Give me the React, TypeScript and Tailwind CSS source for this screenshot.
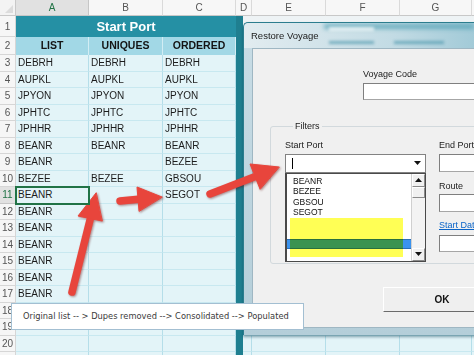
import React from 'react';

type RowData = { n: number; a: string; b: string; c: string };

const DATA: RowData[] = [
  { n: 3, a: 'DEBRH', b: 'DEBRH', c: 'DEBRH' },
  { n: 4, a: 'AUPKL', b: 'AUPKL', c: 'AUPKL' },
  { n: 5, a: 'JPYON', b: 'JPYON', c: 'JPYON' },
  { n: 6, a: 'JPHTC', b: 'JPHTC', c: 'JPHTC' },
  { n: 7, a: 'JPHHR', b: 'JPHHR', c: 'JPHHR' },
  { n: 8, a: 'BEANR', b: 'BEANR', c: 'BEANR' },
  { n: 9, a: 'BEANR', b: '', c: 'BEZEE' },
  { n: 10, a: 'BEZEE', b: 'BEZEE', c: 'GBSOU' },
  { n: 11, a: 'BEANR', b: '', c: 'SEGOT' },
  { n: 12, a: 'BEANR', b: '', c: '' },
  { n: 13, a: 'BEANR', b: '', c: '' },
  { n: 14, a: 'BEANR', b: '', c: '' },
  { n: 15, a: 'BEANR', b: '', c: '' },
  { n: 16, a: 'BEANR', b: '', c: '' },
  { n: 17, a: 'BEANR', b: '', c: '' },
  { n: 18, a: '', b: '', c: '' },
  { n: 19, a: '', b: '', c: '' },
  { n: 20, a: '', b: '', c: '' },
];

const HEADERS = [
  { l: 'A', w: 'w-[73px]' },
  { l: 'B', w: 'w-[74px]' },
  { l: 'C', w: 'w-[73px]' },
  { l: 'D', w: 'w-[16px]' },
  { l: 'E', w: 'w-[74px]' },
  { l: 'F', w: 'w-[74px]' },
  { l: 'G', w: 'w-[72px]' },
  { l: '', w: 'w-[40px]' },
];

const LIST_ITEMS = ['BEANR', 'BEZEE', 'GBSOU', 'SEGOT', '', '', '', ''];

function RowHead({ n }: { n?: number }) {
  const active = n === 11;
  return (
    <div
      className={
        active
          ? 'w-[16px] shrink-0 flex items-center justify-center bg-[#e1e1e1] border-r border-b border-[#c6c6c6] text-[10px] text-[#217346]'
          : 'w-[16px] shrink-0 flex items-center justify-center bg-[#f6f6f6] border-r border-b border-[#d6d6d6] text-[10px] text-[#555]'
      }
    >
      {n}
    </div>
  );
}

function Cell({ w, text, selected }: { w: string; text?: string; selected?: boolean }) {
  return (
    <div
      className={`${w} shrink-0 flex items-center pl-[2px] bg-[#e3f4f8] border-r border-b border-r-[#b5dee9] border-b-[#c8e8f0] text-[10px] text-[#1c1c1c] ${
        selected ? 'relative z-10 outline-2 -outline-offset-1 outline-[#217346]' : ''
      }`}
    >
      {text}
    </div>
  );
}

function DCell() {
  return (
    <div className="w-[16px] shrink-0 flex">
      <div className="w-[7px] bg-[#1f7f90]" />
      <div className="flex-1 bg-[#e3f4f8] border-r border-b border-r-[#b5dee9] border-b-[#c8e8f0]" />
    </div>
  );
}

function DataRow({ r }: { r?: RowData }) {
  return (
    <div className="flex h-[16.5px] shrink-0">
      <RowHead n={r?.n} />
      <Cell w="w-[73px]" text={r?.a} selected={r?.n === 11} />
      <Cell w="w-[74px]" text={r?.b} />
      <Cell w="w-[73px]" text={r?.c} />
      <DCell />
      <Cell w="w-[74px]" />
      <Cell w="w-[74px]" />
      <Cell w="w-[72px]" />
      <Cell w="w-[40px]" />
    </div>
  );
}

function Sheet() {
  return (
    <div className="flex flex-col font-['Liberation_Sans',Arial,sans-serif]">
      {/* column letters */}
      <div className="flex h-[16px] shrink-0">
        <div className="w-[16px] shrink-0 bg-[#f3f3f3] border-r border-b border-[#c8c8c8] flex items-end justify-end p-[2px]">
          <div className="w-0 h-0 border-l-[8px] border-l-transparent border-b-[8px] border-b-[#dcdcdc]" />
        </div>
        {HEADERS.map((h, i) => (
          <div
            key={i}
            className={
              h.l === 'A'
                ? `${h.w} shrink-0 flex items-center justify-center bg-[#e1e1e1] border-r border-b border-[#c6c6c6] text-[10px] text-[#217346]`
                : `${h.w} shrink-0 flex items-center justify-center bg-[#f7f7f7] border-r border-b border-r-[#dadada] border-b-[#c8c8c8] text-[10px] text-[#555]`
            }
          >
            {h.l}
          </div>
        ))}
      </div>

      {/* row 1 */}
      <div className="flex h-[21px] shrink-0">
        <RowHead n={1} />
        <div className="w-[220px] shrink-0 flex items-center justify-center bg-[#2590a4] text-white font-bold text-[13px]">
          Start Port
        </div>
        <div className="w-[16px] shrink-0 flex">
          <div className="w-[7px] bg-[#1f7f90]" />
          <div className="flex-1 bg-[#eef3f5]" />
        </div>
        <div className="flex-1 bg-[#eef3f5]" />
      </div>

      {/* row 2 */}
      <div className="flex h-[18px] shrink-0">
        <RowHead n={2} />
        {['LIST', 'UNIQUES', 'ORDERED'].map((t, i) => (
          <div
            key={t}
            className={`${i === 1 ? 'w-[74px]' : 'w-[73px]'} shrink-0 flex items-center justify-center bg-[#a2d8e6] border-r border-[#d2edf4] font-bold text-[10.5px] text-[#141414]`}
          >
            {t}
          </div>
        ))}
        <DCell />
        <div className="flex-1 bg-[#a2d8e6]" />
      </div>

      {DATA.map((r) => (
        <DataRow key={r.n} r={r} />
      ))}
      <DataRow />
    </div>
  );
}

function TextBox({ w, h }: { w: string; h: string }) {
  return (
    <div
      className={`${w} ${h} shrink-0 bg-white border border-[#a6a6a6] border-t-[#7f7f7f] border-l-[#7f7f7f]`}
    />
  );
}

function Dialog() {
  return (
    <div className="absolute left-[243px] top-[22px] w-[300px] h-[313px] flex flex-col border-t border-l border-[#2c7d8e] rounded-tl-[5px] bg-gradient-to-b from-[#c9dde6] to-[#b4ced9] font-['Liberation_Sans',Arial,sans-serif] text-[#1b1b1b] shadow-[0_2px_3px_rgba(0,60,80,0.45)]">
      {/* title bar */}
      <div className="relative h-[25px] shrink-0 flex items-center pl-[7px] pt-[2px] overflow-hidden rounded-tl-[5px] bg-gradient-to-r from-[#e2ecf0] via-[#c2dbe4] to-[#86bccd]">
        <div className="absolute left-[80px] top-[1px] w-[150px] h-[5px] bg-[#4d9fb3] blur-[2px] opacity-70" />
        <div className="absolute left-[85px] top-[4px] w-[45px] h-[4px] bg-white blur-[1.5px] opacity-70" />
        <div className="absolute left-[85px] top-[18px] w-[45px] h-[3px] bg-[#3d8ea5] blur-[1.5px] opacity-60" />
        <div className="absolute left-[150px] top-[18px] w-[50px] h-[3px] bg-[#3d8ea5] blur-[1.5px] opacity-60" />
        <span className="relative text-[9.5px]">Restore Voyage</span>
      </div>

      <div className="flex-1 flex pl-[8px] pb-[7px]">
        <div className="flex-1 flex flex-col bg-[#f0f0f0] border border-[#9fb7c3] text-[9px]">
          {/* voyage code */}
          <div className="ml-[110px] mt-[20px] flex flex-col">
            <span className="leading-[11px]">Voyage Code</span>
            <div className="mt-[3px]">
              <TextBox w="w-[180px]" h="h-[17px]" />
            </div>
          </div>

          {/* filters */}
          <fieldset className="ml-[17px] mt-[21px] w-[260px] h-[143px] min-w-0 border border-[#d2d9dd] rounded-[3px] pl-[14px] pt-[8px]">
            <legend className="ml-[8px] px-[2px] leading-[11px]">Filters</legend>
            <div className="flex gap-[13px]">
              <div className="w-[145px] flex flex-col">
                <span className="leading-[11px]">Start Port</span>
                <div className="mt-[2.5px] h-[19px] flex bg-white border border-[#828282]">
                  <div className="flex-1 flex items-center pl-[6px]">
                    <div className="w-[1px] h-[11px] bg-black" />
                  </div>
                  <div className="w-[15px] flex items-center justify-center">
                    <svg width="7" height="4" viewBox="0 0 7 4">
                      <path d="M0 0h7L3.5 4z" fill="#111" />
                    </svg>
                  </div>
                </div>
                <div className="h-[89px] flex bg-white border border-[#4a4a4a] border-l-2">
                  <div className="relative flex-1 flex flex-col pt-[2px] text-[8.5px]">
                    {LIST_ITEMS.map((it, i) => (
                      <div
                        key={i}
                        className={
                          i === 6
                            ? 'h-[10px] shrink-0 bg-[#3b93ee] border-y border-[#2a6fb8]'
                            : 'h-[10.5px] shrink-0 leading-[10.5px] pl-[6px] text-[#111]'
                        }
                      >
                        {it}
                      </div>
                    ))}
                    <div className="absolute left-[3px] top-[44px] w-[113px] h-[39px] bg-[#ffff55] mix-blend-multiply" />
                  </div>
                  <div className="w-[14px] flex flex-col bg-[#f3f3f3] border-l border-[#d0d0d0]">
                    <div className="h-[13px] flex items-center justify-center bg-[#f0f0f0] border border-white border-b-[#8a8a8a] border-r-[#8a8a8a]">
                      <svg width="7" height="4" viewBox="0 0 7 4">
                        <path d="M0 4h7L3.5 0z" fill="#111" />
                      </svg>
                    </div>
                    <div className="h-[11px] bg-[#f0f0f0] border border-white border-b-[#8a8a8a] border-r-[#8a8a8a]" />
                    <div className="flex-1" />
                    <div className="h-[13px] flex items-center justify-center bg-[#f0f0f0] border border-white border-b-[#8a8a8a] border-r-[#8a8a8a]">
                      <svg width="7" height="4" viewBox="0 0 7 4">
                        <path d="M0 0h7L3.5 4z" fill="#111" />
                      </svg>
                    </div>
                  </div>
                </div>
              </div>

              <div className="w-[90px] flex flex-col">
                <span className="leading-[11px] whitespace-nowrap">End Port</span>
                <div className="mt-[3px]">
                  <TextBox w="w-[90px]" h="h-[18px]" />
                </div>
                <span className="mt-[8.5px] leading-[11px]">Route</span>
                <div className="mt-[2.5px]">
                  <TextBox w="w-[90px]" h="h-[18px]" />
                </div>
                <span className="mt-[7.5px] leading-[11px] text-[#0a64c8] underline whitespace-nowrap">Start Date</span>
                <div className="mt-[4px]">
                  <TextBox w="w-[90px]" h="h-[17px]" />
                </div>
              </div>
            </div>
          </fieldset>

          {/* ok */}
          <div className="ml-[130px] mt-[23px] w-[118px] h-[25px] flex items-center justify-center bg-[#efefef] border border-t-white border-l-white border-b-[#6b6b6b] border-r-[#6b6b6b] font-bold text-[10px] text-[#111]">
            OK
          </div>
        </div>
      </div>
    </div>
  );
}

function Arrows() {
  return (
    <svg
      className="absolute left-0 top-0 pointer-events-none drop-shadow-[1px_1px_1px_rgba(90,0,0,0.45)]"
      width="474"
      height="355"
      viewBox="0 0 474 355"
    >
      <g fill="#e8453c" stroke="#e8453c" strokeLinecap="round" strokeLinejoin="round">
        <line x1="72" y1="292" x2="91" y2="216" strokeWidth="7.5" />
        <polygon points="96,193 78,216 102,221" strokeWidth="1" />
        <line x1="120" y1="201" x2="141" y2="199" strokeWidth="7.5" />
        <polygon points="162,197 137,187 139,211" strokeWidth="1" />
        <line x1="210" y1="194" x2="254" y2="177" strokeWidth="7.5" />
        <polygon points="279,167 250,164 260,189" strokeWidth="1" />
      </g>
    </svg>
  );
}

export default function App() {
  return (
    <div className="relative w-[474px] h-[355px] overflow-hidden bg-white">
      <Sheet />
      <Dialog />
      <Arrows />
      <div className="absolute left-[11px] top-[303px] w-[293px] h-[27px] flex items-center pl-[11px] bg-white border border-[#a3bfd2] font-['DejaVu_Sans',Verdana,sans-serif] text-[8.3px] text-[#3a3a3a] whitespace-nowrap">
        Original list -- &gt; Dupes removed --&gt; Consolidated --&gt; Populated
      </div>
    </div>
  );
}
